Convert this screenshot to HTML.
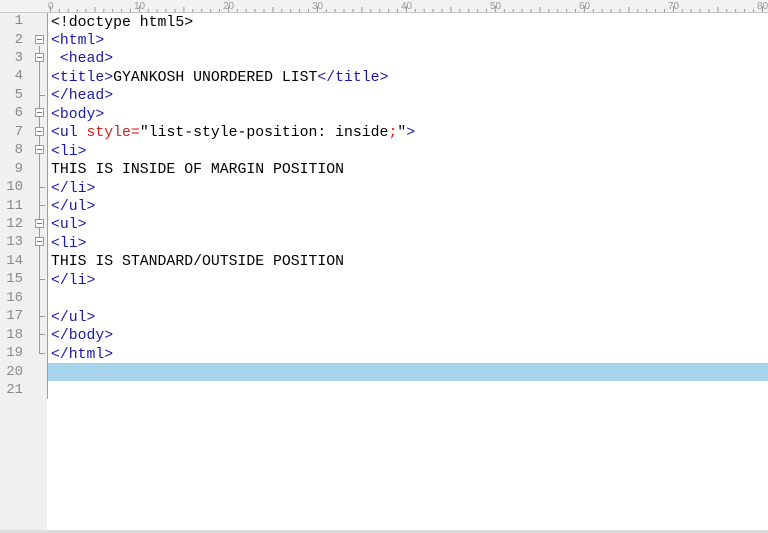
<!DOCTYPE html>
<html><head><style>
body{margin:0;width:768px;height:533px;background:#fff;position:relative;overflow:hidden;font-family:"Liberation Mono",monospace;}
.ruler{position:absolute;left:0;top:0;width:768px;height:12px;background:#f2f2f2;border-bottom:1px solid #c8c8c8;}
.gut{position:absolute;left:0;top:13px;width:47px;height:518px;background:#f0f0f0;}
.green{position:absolute;left:47px;top:13px;width:1px;height:386px;background:#5ccc5c;}
.ln{position:absolute;left:0;width:23px;text-align:right;font-size:14px;color:#8a8a8a;}
.code{position:absolute;left:51px;font-size:14.8px;white-space:pre;color:#000;}
.t{color:#1a1aa6}.a{color:#d02020}
.hl{position:absolute;left:48px;top:363px;width:720px;height:18px;background:#a8d4ec;}
.box{position:absolute;left:35px;width:9px;height:9px;border:1px solid #999;background:#fff;box-sizing:border-box;}
.box:after{content:"";position:absolute;left:1px;top:3px;width:5px;height:1px;background:#777;}
.vl{position:absolute;left:39px;width:1px;background:#999;}
.tk{position:absolute;left:39px;width:6px;height:1px;background:#999;}
.bot{position:absolute;left:0;top:530px;width:768px;height:3px;background:#ddd;}
</style></head><body>
<div class="ruler">
<svg width="768" height="12" style="position:absolute;left:0;top:0">
<g stroke="#999" stroke-width="1">
<path d="M50.5 12V6M59.4 12V9M68.3 12V9M77.2 12V9M86 12V9M95 12V7M103.8 12V9M112.7 12V9M121.6 12V9M130.5 12V9M139.4 12V6M148.3 12V9M157.2 12V9M166 12V9M175 12V9M183.9 12V7M192.8 12V9M201.7 12V9M210.6 12V9M219.5 12V9M228.4 12V6M237.3 12V9M246.2 12V9M255 12V9M264 12V9M272.9 12V7M281.8 12V9M290.7 12V9M299.6 12V9M308.5 12V9M317.4 12V6M326.3 12V9M335.2 12V9M344 12V9M353 12V9M361.9 12V7M370.8 12V9M379.7 12V9M388.6 12V9M397.5 12V9M406.4 12V6M415.3 12V9M424.2 12V9M433 12V9M442 12V9M450.9 12V7M459.8 12V9M468.7 12V9M477.6 12V9M486.5 12V9M495.4 12V6M504.3 12V9M513.2 12V9M522 12V9M531 12V9M539.9 12V7M548.8 12V9M557.7 12V9M566.6 12V9M575.5 12V9M584.4 12V6M593.3 12V9M602.2 12V9M611 12V9M620 12V9M628.9 12V7M637.8 12V9M646.7 12V9M655.6 12V9M664.5 12V9M673.4 12V6M682.3 12V9M691.2 12V9M700 12V9M709 12V9M717.9 12V7M726.8 12V9M735.7 12V9M744.6 12V9M753.5 12V9M762.4 12V6"/>
</g>
<g font-family="Liberation Sans" font-size="10" fill="#999">
<text x="48" y="9">0</text><text x="134" y="9">10</text><text x="223" y="9">20</text><text x="312" y="9">30</text><text x="401" y="9">40</text><text x="490" y="9">50</text><text x="579" y="9">60</text><text x="668" y="9">70</text><text x="757" y="9">80</text>
</g></svg>
</div>
<div class="gut"></div>
<div class="hl"></div>
<div class="green"></div>
<div class="vl" style="top:46px;height:308px"></div>
<div class="tk" style="top:95px"></div>
<div class="tk" style="top:187px"></div>
<div class="tk" style="top:205px"></div>
<div class="tk" style="top:279px"></div>
<div class="tk" style="top:316px"></div>
<div class="tk" style="top:334px"></div>
<div class="tk" style="top:353px"></div>
<div class="box" style="top:35px"></div>
<div class="box" style="top:53px"></div>
<div class="box" style="top:108px"></div>
<div class="box" style="top:127px"></div>
<div class="box" style="top:145px"></div>
<div class="box" style="top:219px"></div>
<div class="box" style="top:237px"></div>
<div class="ln" style="top:13px">1</div><div class="ln" style="top:31.5px">2</div><div class="ln" style="top:50px">3</div><div class="ln" style="top:68.4px">4</div><div class="ln" style="top:86.8px">5</div><div class="ln" style="top:105.3px">6</div><div class="ln" style="top:123.7px">7</div><div class="ln" style="top:142.2px">8</div><div class="ln" style="top:160.6px">9</div><div class="ln" style="top:179px">10</div><div class="ln" style="top:197.5px">11</div><div class="ln" style="top:216px">12</div><div class="ln" style="top:234.4px">13</div><div class="ln" style="top:252.8px">14</div><div class="ln" style="top:271.3px">15</div><div class="ln" style="top:289.7px">16</div><div class="ln" style="top:308.2px">17</div><div class="ln" style="top:326.6px">18</div><div class="ln" style="top:345px">19</div><div class="ln" style="top:363.5px">20</div><div class="ln" style="top:382px">21</div>
<div class="code" style="top:13.5px;line-height:18.45px">&lt;!doctype html5&gt;
<span class="t">&lt;html&gt;</span>
 <span class="t">&lt;head&gt;</span>
<span class="t">&lt;title&gt;</span>GYANKOSH UNORDERED LIST<span class="t">&lt;/title&gt;</span>
<span class="t">&lt;/head&gt;</span>
<span class="t">&lt;body&gt;</span>
<span class="t">&lt;ul </span><span class="a">style=</span>"list-style-position: inside<span class="a">;</span>"<span class="t">&gt;</span>
<span class="t">&lt;li&gt;</span>
THIS IS INSIDE OF MARGIN POSITION
<span class="t">&lt;/li&gt;</span>
<span class="t">&lt;/ul&gt;</span>
<span class="t">&lt;ul&gt;</span>
<span class="t">&lt;li&gt;</span>
THIS IS STANDARD/OUTSIDE POSITION
<span class="t">&lt;/li&gt;</span>

<span class="t">&lt;/ul&gt;</span>
<span class="t">&lt;/body&gt;</span>
<span class="t">&lt;/html&gt;</span>
</div>
<div class="bot"></div>
</body></html>
